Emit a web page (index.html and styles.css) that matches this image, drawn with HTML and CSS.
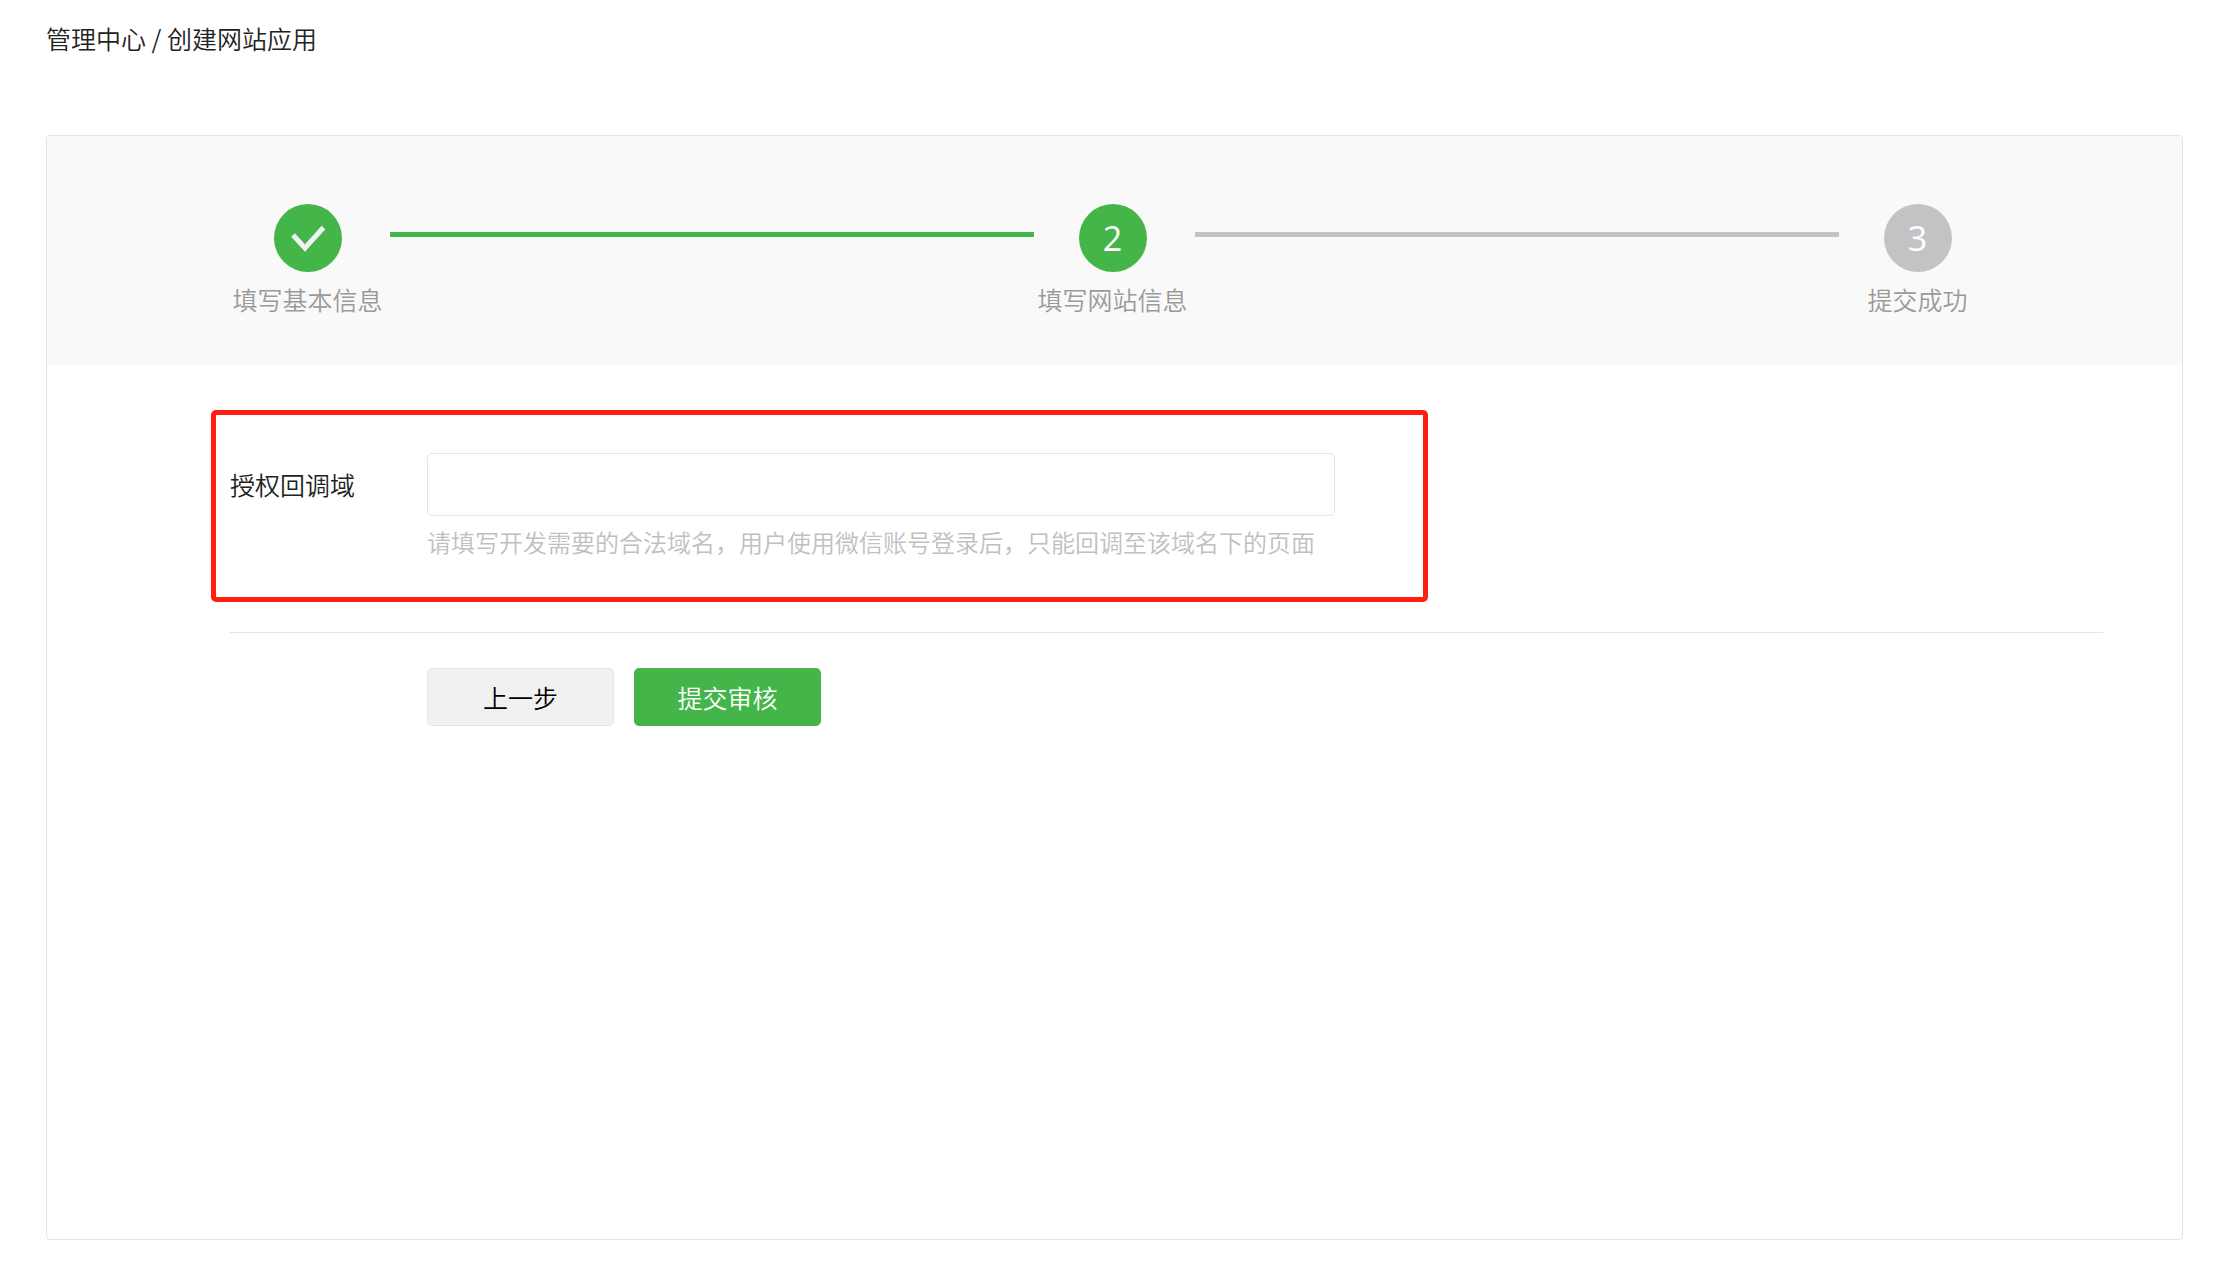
FILE: index.html
```html
<!DOCTYPE html>
<html lang="zh-CN">
<head>
    <meta charset="UTF-8">
    <meta name="viewport" content="width=device-width, initial-scale=1.0">
    <title>创建网站应用</title>
    <link rel="stylesheet" href="styles.css">
</head>
<body>
    <nav class="breadcrumb"><a href="#">管理中心</a> / <span>创建网站应用</span></nav>

    <main class="panel">
        <ol class="steps">
            <li class="step done">
                <span class="step-icon">
                    <svg viewBox="0 0 68 68" width="68" height="68" aria-hidden="true">
                        <path d="M19 31 L31 44 L49.5 23.5" fill="none" stroke="#f0f1f2" stroke-width="5"/>
                    </svg>
                </span>
                <span class="step-name">填写基本信息</span>
            </li>
            <li class="step-line done" aria-hidden="true"></li>
            <li class="step done">
                <span class="step-icon">2</span>
                <span class="step-name">填写网站信息</span>
            </li>
            <li class="step-line" aria-hidden="true"></li>
            <li class="step">
                <span class="step-icon">3</span>
                <span class="step-name">提交成功</span>
            </li>
        </ol>

        <form class="form">
            <div class="field highlight">
                <label for="domain">授权回调域</label>
                <div class="field-main">
                    <input type="text" id="domain" name="domain" aria-describedby="domain-tips">
                    <p class="tips" id="domain-tips">请填写开发需要的合法域名，用户使用微信账号登录后，只能回调至该域名下的页面</p>
                </div>
            </div>
            <div class="actions">
                <button type="button" class="btn">上一步</button>
                <button type="submit" class="btn btn-primary">提交审核</button>
            </div>
        </form>
    </main>
</body>
</html>
```
FILE: styles.css
```css
* {
    box-sizing: border-box;
}
body {
    display: flex;
    flex-direction: column;
    min-height: 100vh;
    margin: 0;
    padding: 18px 35px 40px 46px;
    background: #fff;
    color: #222;
    font-family: "Noto Sans CJK SC", sans-serif;
    font-size: 25px;
    font-weight: 350;
    line-height: 40px;
}
.breadcrumb {
    margin-bottom: 77px;
}
.breadcrumb a {
    color: inherit;
    text-decoration: none;
}
.panel {
    flex: 1;
    border: 1px solid #e4e5e6;
    border-radius: 4px;
}

/* steps */
.steps {
    display: flex;
    margin: 0;
    padding: 68px 182px 46px;
    background: #f9f9f9;
    list-style: none;
}
.step {
    display: flex;
    flex-direction: column;
    align-items: center;
    gap: 7px;
    width: 161px;
    padding-right: 4px;
    color: #9a9a9a;
}
.step-icon {
    width: 68px;
    height: 68px;
    border-radius: 50%;
    background: #c2c3c5;
    color: #fff;
    font-family: "Open Sans", sans-serif;
    font-size: 34px;
    font-weight: 400;
    line-height: 68px;
    text-align: center;
}
.step-icon svg {
    display: block;
}
.step-name {
    white-space: nowrap;
}
.step-line {
    flex: 1;
    height: 5px;
    margin-top: 28px;
    background: #c2c3c5;
}
.step.done .step-icon,
.step-line.done {
    background: #44b549;
}

/* form */
.form {
    padding: 45px 79px 45px 183px;
}
.field {
    display: flex;
}
.field label {
    width: 197px;
    padding-top: 11px;
}
.field-main {
    flex: 1;
}
.highlight {
    max-width: 1217px;
    margin: 0 0 30px -19px;
    padding: 38px 88px 35px 14px;
    border: 5px solid #ff1f10;
    border-radius: 5px;
}
input {
    display: block;
    width: 100%;
    height: 63px;
    padding: 0 16px;
    border: 1px solid #e4e5e6;
    border-radius: 5px;
    background: #fff;
    font: inherit;
}
.tips {
    margin: 6px 0 0;
    color: #bfc0c2;
    font-size: 24px;
}
.actions {
    display: flex;
    gap: 20px;
    padding: 35px 0 0 197px;
    border-top: 1px solid #e4e5e6;
}
.btn {
    width: 187px;
    height: 58px;
    border: 1px solid #e4e5e6;
    border-radius: 5px;
    background: #f0f0f0;
    color: #000;
    font: inherit;
    cursor: pointer;
}
.btn-primary {
    border-color: #44b549;
    background: #44b549;
    color: #fff;
}
```
